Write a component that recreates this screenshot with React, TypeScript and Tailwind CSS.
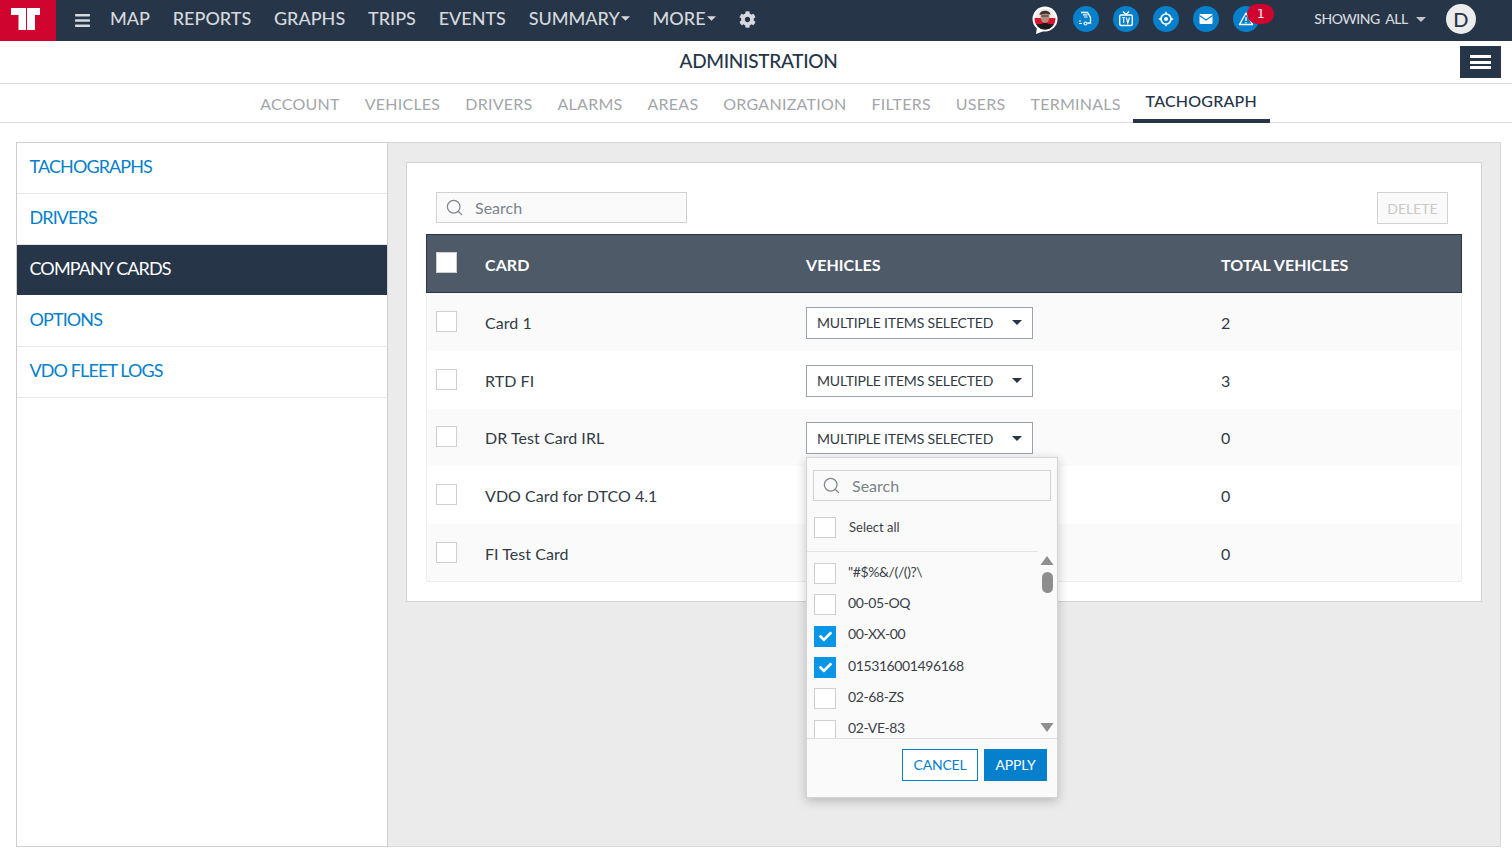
import { FaBars, FaCheck, FaCog } from 'react-icons/fa'
import { Search } from 'lucide-react'

const navItems = ['MAP', 'REPORTS', 'GRAPHS', 'TRIPS', 'EVENTS']
const tabs = ['ACCOUNT', 'VEHICLES', 'DRIVERS', 'ALARMS', 'AREAS', 'ORGANIZATION', 'FILTERS', 'USERS', 'TERMINALS']
const sideItems = ['TACHOGRAPHS', 'DRIVERS', 'COMPANY CARDS', 'OPTIONS', 'VDO FLEET LOGS']
const rows = [
  { name: 'Card 1', total: 2 },
  { name: 'RTD FI', total: 3 },
  { name: 'DR Test Card IRL', total: 0 },
  { name: 'VDO Card for DTCO 4.1', total: 0 },
  { name: 'FI Test Card', total: 0 },
]
const options = [
  { label: '"#$%&/(/()?\\', checked: false },
  { label: '00-05-OQ', checked: false },
  { label: '00-XX-00', checked: true },
  { label: '015316001496168', checked: true },
  { label: '02-68-ZS', checked: false },
  { label: '02-VE-83', checked: false },
]

function Caret({ className }: { className: string }) {
  return (
    <svg width="10" height="5" viewBox="0 0 10 5" className={className}>
      <path d="M0 0h10L5 5z" fill="currentColor" />
    </svg>
  )
}

function Logo() {
  return (
    <svg width="56" height="41" viewBox="0 0 56 41">
      <path d="M11 8h15v22h-7.500V15H11z M27 8h13v7h-5v15h-8z" fill="#fff" />
    </svg>
  )
}

function RoundIcon({ children }: { children: React.ReactNode }) {
  return (
    <div className="w-[26px] h-[26px] rounded-full bg-[#0680cc] flex items-center justify-center shrink-0">
      <svg width="20" height="20" viewBox="0 0 20 20" fill="none" stroke="#fff">
        {children}
      </svg>
    </div>
  )
}

function Avatar() {
  return (
    <svg width="26" height="29" viewBox="0 0 26 29" className="shrink-0 mt-[2px]">
      <path d="M5 21l-1 7 8-3z" fill="#fff" />
      <circle cx="13" cy="13" r="12.500" fill="#fff" />
      <clipPath id="face">
        <circle cx="13" cy="13" r="10.500" />
      </clipPath>
      <g clipPath="url(#face)">
        <rect x="2" y="2" width="22" height="10" fill="#f1ecec" />
        <rect x="2" y="12" width="22" height="6" fill="#d8152f" />
        <rect x="2" y="18" width="22" height="6" fill="#2a2226" />
        <ellipse cx="13" cy="11" rx="4.500" ry="6" fill="#b58b78" />
        <path d="M7.500 9c0-5 10.500-6 11 0-4-2-7-1-11 0z" fill="#3a3230" />
        <rect x="9.500" y="9.500" width="7" height="1" fill="#333" />
        <path d="M6 24c1-6 4-7 7-7s6 1 7 7z" fill="#1d1a1c" />
      </g>
    </svg>
  )
}

function Checkbox({ checked, wide }: { checked?: boolean; wide?: boolean }) {
  const size = wide ? 'w-[22px] h-[21px]' : 'w-[21px] h-[21px]'
  if (checked) {
    return (
      <span className={`${size} bg-[#0a96e6] flex items-center justify-center shrink-0`}>
        <FaCheck className="text-white text-[13px]" />
      </span>
    )
  }
  return <span className={`${size} block bg-white border border-[#cfcfcf] shrink-0`} />
}

function VehicleSelect({ label }: { label: boolean }) {
  return (
    <div className="w-[227px] h-[32px] border border-[#9aa3ad] bg-white flex items-center justify-between pl-[10px] pr-[10px] text-[14px] tracking-[-0.17px] text-[#323a45]">
      {/* rows under the open popover only show their left edge */}
      {label && <span>MULTIPLE ITEMS SELECTED</span>}
      {label && <Caret className="text-[#263548]" />}
    </div>
  )
}

function VehiclePopover() {
  return (
    <div className="absolute left-[399px] top-[294px] w-[252px] h-[341px] bg-[#fafafa] border border-[#d4d4d4] shadow-[0_3px_10px_rgba(0,0,0,0.22)] z-10 text-[14px] text-[#3b4048] flex flex-col">
      <div className="px-[6px] pt-[12px]">
        <div className="h-[31px] border border-[#d2d2d2] flex items-center pl-[8px] gap-[11px] text-[16px] text-[#7c838b]">
          <Search size={19} strokeWidth={1.6} className="text-[#7f868d]" />
          Search
        </div>
      </div>
      <div className="flex items-center h-[51px] pl-[7px] pt-[3px] gap-[13px] mr-[19px] border-b border-[#e4e4e4] shrink-0">
        <Checkbox wide />
        <span className="text-[13px]">Select all</span>
      </div>
      <div className="relative flex-1 overflow-hidden border-b border-[#dedede]">
        <div className="pl-[7px] pt-[6px]">
          {options.map((o) => (
            <div key={o.label} className="flex items-center h-[31.300px] gap-[12px] shrink-0">
              <Checkbox checked={o.checked} wide />
              <span className="-mt-[5px] tracking-[-0.4px]">{o.label}</span>
            </div>
          ))}
        </div>
        <div className="absolute right-0 top-0 bottom-0 w-[20px] bg-[#fafafa]">
          <svg width="14" height="9" viewBox="0 0 14 9" className="absolute left-[3px] top-[4px]">
            <path d="M7 0l6.500 9H0.500z" fill="#8e8e8e" />
          </svg>
          <div className="absolute left-[5px] top-[20px] w-[11px] h-[21px] rounded-full bg-[#8e8e8e]" />
          <svg width="14" height="9" viewBox="0 0 14 9" className="absolute left-[3px] top-[171px]">
            <path d="M0.500 0h13L7 9z" fill="#8e8e8e" />
          </svg>
        </div>
      </div>
      <div className="h-[58px] flex items-start justify-end gap-[6px] pt-[10px] pr-[10px] shrink-0">
        <button className="w-[76px] h-[32px] pb-[2px] border border-[#0680cc] bg-white text-[#0680cc] text-[14px] tracking-[-0.2px]">CANCEL</button>
        <button className="w-[63px] h-[32px] pb-[2px] bg-[#0680cc] text-white text-[14px] tracking-[-0.2px]">APPLY</button>
      </div>
    </div>
  )
}

export default function App() {
  return (
    <div className="w-[1512px] h-[853px] overflow-hidden bg-white font-['Lato',sans-serif] text-[#323a45]">
      <header className="h-[41px] bg-[#263548] flex items-center">
        <div className="w-[56px] h-[41px] bg-[#d0052f] shrink-0">
          <Logo />
        </div>
        <FaBars className="ml-[18px] -mt-[1px] text-[#d5d8dc] text-[17px] shrink-0" />
        <nav className="flex items-center ml-[19px] gap-[22.800px] text-[18px] font-medium text-[#d5d8dc] -mt-[5px]">
          {navItems.map((n) => (
            <span key={n}>{n}</span>
          ))}
          <span className="flex items-center gap-[1px]">
            SUMMARY
            <Caret className="text-[#d5d8dc] w-[9px]" />
          </span>
          <span className="flex items-center gap-[1px]">
            MORE
            <Caret className="text-[#d5d8dc] w-[9px]" />
          </span>
          <FaCog className="ml-[1px] text-[#d5d8dc] text-[17px] mt-[3px]" />
        </nav>
        <div className="flex items-center ml-[276px] -mt-[3px]">
          <Avatar />
          <div className="flex items-center gap-[14px] ml-[15px]">
            <RoundIcon>
              <path d="M5 3.500h6.500l3 5v5.500h-3" strokeWidth="1.300" />
              <path d="M7 5.800h4.500M8 8h3.500" strokeWidth="1.200" />
              <path d="M3 12h2M3 14.500h3" strokeWidth="1.200" />
              <circle cx="9.500" cy="14.500" r="1.500" strokeWidth="1.200" />
            </RoundIcon>
            <RoundIcon>
              <path d="M7 2.500L10 5.500l3-3" strokeWidth="1.400" />
              <rect x="3.700" y="6" width="12.600" height="10.500" rx="1.500" strokeWidth="1.400" />
              <path d="M6.200 8.500h3M7.700 8.500v5.500M10.300 8.500l1.500 5.500 1.700-5.500" strokeWidth="1.100" />
            </RoundIcon>
            <RoundIcon>
              <circle cx="10" cy="10" r="5" strokeWidth="1.700" />
              <circle cx="10" cy="10" r="2" fill="#fff" stroke="none" />
              <path d="M10 2.800v2M10 15.200v2M2.800 10h2M15.200 10h2" strokeWidth="1.500" />
            </RoundIcon>
            <RoundIcon>
              <rect x="3.500" y="5" width="13" height="10" rx="1" fill="#fff" stroke="none" />
              <path d="M3.500 6.500L10 11l6.500-4.500" stroke="#0680cc" strokeWidth="1.200" />
            </RoundIcon>
            <div className="relative">
              <RoundIcon>
                <path d="M10 4l6.500 11.500h-13z" strokeWidth="1.400" strokeLinejoin="round" />
                <path d="M10 8v4M10 13v1.200" strokeWidth="1.300" />
              </RoundIcon>
              <span className="absolute left-[14px] -top-[2px] w-[27px] h-[20px] rounded-full bg-[#d0052f] text-white text-[12px] flex items-center justify-center font-['DejaVu_Sans',sans-serif]">
                1
              </span>
            </div>
          </div>
          <span className="ml-[55px] -mt-[1px] text-[14px] font-medium text-[#d5d8dc] tracking-[-0.5px] whitespace-pre">SHOWING  ALL</span>
          <Caret className="ml-[8px] text-[#c3c7cc]" />
          <span className="ml-[20px] w-[30px] h-[30px] rounded-full bg-[#ececec] text-[#263548] text-[20px] font-medium flex items-center justify-center">
            D
          </span>
        </div>
      </header>

      <div className="relative h-[43px] border-b border-[#dcdcdc] flex items-center justify-center pl-[5px] pb-[2px]">
        <h1 className="text-[19px] font-medium text-[#263548] tracking-[-0.3px]">ADMINISTRATION</h1>
        <div className="absolute right-[11px] top-[5px] w-[41px] h-[32px] bg-[#263548] flex items-center justify-center">
          <div className="w-[21px] flex flex-col gap-[2.500px]">
            <span className="h-[3px] bg-white" />
            <span className="h-[3px] bg-white" />
            <span className="h-[3px] bg-white" />
          </div>
        </div>
      </div>

      <div className="h-[39px] border-b border-[#dcdcdc] flex justify-center pl-[18px]">
        <div className="flex items-center gap-[25px] text-[16px] tracking-[0.25px] text-[#a3a6aa] pt-[2px]">
          {tabs.map((t) => (
            <span key={t}>{t}</span>
          ))}
        </div>
        <div className="ml-[12px] h-[39px] w-[137px] border-b-[4px] border-[#263548] flex items-center justify-center text-[16px] tracking-[0.2px] font-medium text-[#263548] pb-[2px]">
          TACHOGRAPH
        </div>
      </div>

      <main className="flex ml-[16px] mt-[19px] w-[1485px] h-[705px]">
        <aside className="w-[372px] shrink-0 border border-[#cfcfcf] bg-white">
          {sideItems.map((s) =>
            s === 'COMPANY CARDS' ? (
              <div key={s} className="h-[50px] mb-px flex items-center pl-[12.500px] pb-[3px] bg-[#263548] text-white text-[18px] tracking-[-0.9px]">
                {s}
              </div>
            ) : (
              <div key={s} className="h-[51px] flex items-center pl-[12.500px] pb-[3px] border-b border-[#e8e8e8] text-[#0680cc] text-[18px] tracking-[-0.9px]">
                {s}
              </div>
            ),
          )}
        </aside>

        <section className="flex-1 bg-[#ebebeb] border border-l-0 border-[#d8d8d8] pl-[18px] pr-[18px] pt-[19px]">
          <div className="relative h-[440px] bg-white border border-[#d2d2d2] pt-[29px] pl-[19px] pr-[19px]">
            <div className="flex items-start justify-between pl-[10px] pr-[14px] h-[42px]">
              <div className="w-[251px] h-[31px] bg-[#fafafa] border border-[#d2d2d2] flex items-center pl-[8px] gap-[11px] text-[16px] text-[#7c838b]">
                <Search size={19} strokeWidth={1.6} className="text-[#7f868d]" />
                Search
              </div>
              <button className="w-[71px] h-[32px] bg-[#fafafa] border border-[#d2d2d2] text-[14px] text-[#c9c9c9]">DELETE</button>
            </div>
            <div className="grid grid-cols-[59px_321px_415px_1fr] items-center h-[59px] bg-[#4e5a67] border border-[#263548] text-white text-[16px] tracking-[0.05px] font-bold">
              <span className="pl-[9px] -mt-[3px]">
                <Checkbox />
              </span>
              <span className="-ml-px pt-[2px]">CARD</span>
              <span className="-ml-px pt-[2px]">VEHICLES</span>
              <span className="-ml-px pt-[2px]">TOTAL VEHICLES</span>
            </div>
            {rows.map((r, i) => (
              <div
                key={r.name}
                className={`grid grid-cols-[59px_321px_415px_1fr] items-center h-[57.800px] pt-[2px] border-x border-[#ededed] text-[16px] tracking-[0.05px] text-[#323a45] ${i % 2 === 0 ? 'bg-[#fafafa]' : 'bg-white'} ${i === 4 ? 'border-b' : ''}`}
              >
                <span className="pl-[9px] -mt-[3px]">
                  <Checkbox />
                </span>
                <span className="-ml-px">{r.name}</span>
                <span className="-ml-px">
                  <VehicleSelect label={i < 3} />
                </span>
                <span className="-ml-px">{r.total}</span>
              </div>
            ))}
            <VehiclePopover />
          </div>
        </section>
      </main>
    </div>
  )
}
